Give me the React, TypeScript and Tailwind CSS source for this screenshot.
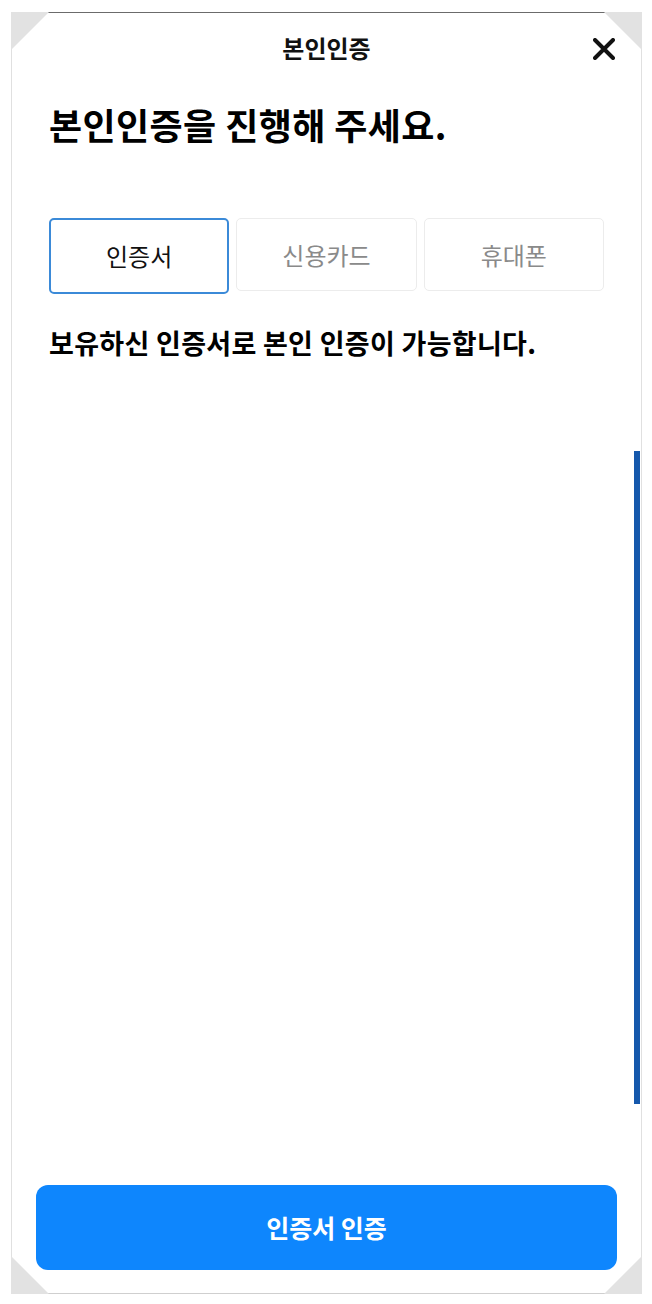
import { useState } from "react";

const tabs = ["인증서", "신용카드", "휴대폰"];

function Corner({ className, points }: { className: string; points: string }) {
  return (
    <svg className={`absolute w-[38px] h-[38px] ${className}`} viewBox="0 0 38 38">
      <polygon points={points} fill="#e2e2e2" />
    </svg>
  );
}

export default function App() {
  const [active, setActive] = useState(0);

  return (
    <div
      className="w-[652px] h-[1304px] bg-white pt-[12px] pl-[11px]"
      style={{ fontFamily: '"Noto Sans CJK KR", "Noto Sans", sans-serif' }}
    >
      <div className="relative w-[631px] h-[1282px] border-t border-t-[#6b6b6b] border-x border-x-[#e0e0e0] border-b border-b-[#cfcfcf] flex flex-col">
        {/* folded corners */}
        <Corner className="-top-px -left-px" points="0,0 38,0 0,38" />
        <Corner className="-top-px -right-px" points="0,0 38,0 38,38" />
        <Corner className="-bottom-px -left-px" points="0,0 0,38 38,38" />
        <Corner className="-bottom-px -right-px" points="38,0 38,38 0,38" />

        {/* header */}
        <div className="relative h-[70px] flex items-center justify-center">
          <h2 className="text-[24px] font-bold text-[#111] leading-[32px]">본인인증</h2>
          <button className="absolute right-[26px] top-[25px] w-[22px] h-[22px]" aria-label="닫기">
            <svg viewBox="0 0 22 22" className="w-[22px] h-[22px]">
              <path d="M2 2 L20 20 M20 2 L2 20" stroke="#111" strokeWidth="4" strokeLinecap="round" />
            </svg>
          </button>
        </div>

        <div className="flex-1 flex flex-col px-[37px]">
          <h1 className="mt-[17px] text-[36px] font-bold text-black tracking-[0.4px] leading-[48px]">
            본인인증을 진행해 주세요.
          </h1>

          <div className="mt-[70px] grid grid-cols-3 gap-[7px]">
            {tabs.map((t, i) => (
              <button
                key={t}
                onClick={() => setActive(i)}
                className={
                  i === active
                    ? "h-[76px] rounded-[5px] border-2 border-[#3b8ad8] text-[24px] text-[#111]"
                    : "h-[73px] rounded-[5px] border border-[#ececec] text-[24px] text-[#8a8a8a]"
                }
              >
                {t}
              </button>
            ))}
          </div>

          <p className="mt-[30px] text-[27px] font-bold text-black tracking-[0.3px] leading-[38px]">
            보유하신 인증서로 본인 인증이 가능합니다.
          </p>
        </div>

        <div className="px-[24px] pb-[23px]">
          <button className="w-full h-[85px] rounded-[12px] bg-[#0e86fd] text-white text-[25px] font-bold">
            {tabs[active]} 인증
          </button>
        </div>

        {/* scrollbar */}
        <div className="absolute right-[1px] top-[438px] w-[6px] h-[653px] bg-[#1558ac]" />
      </div>
    </div>
  );
}
